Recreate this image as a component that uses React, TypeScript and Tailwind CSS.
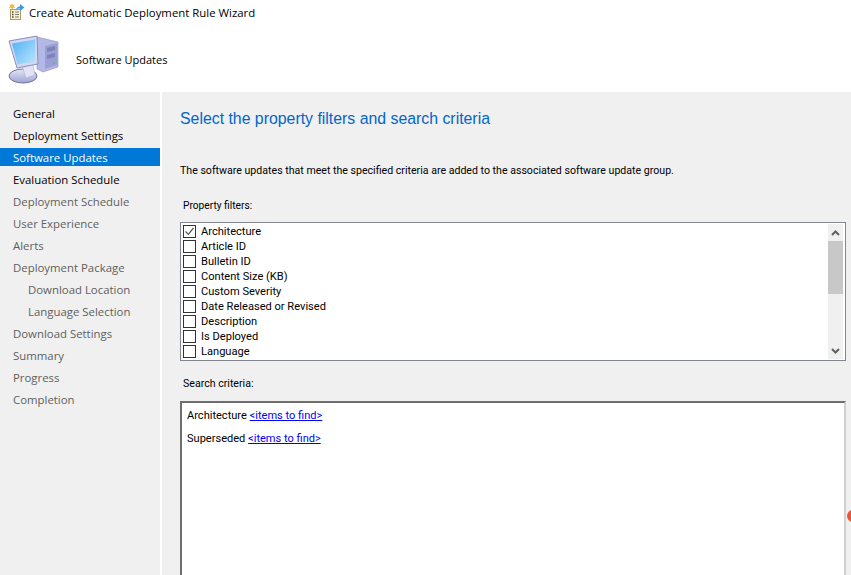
import React from 'react';

const font = { fontFamily: '"Open Sans", "Noto Sans", sans-serif' };
const bodyFont = { fontFamily: 'Roboto, "Liberation Sans", sans-serif' };

const steps = [
  { label: 'General', tone: 'done' },
  { label: 'Deployment Settings', tone: 'done' },
  { label: 'Software Updates', tone: 'active' },
  { label: 'Evaluation Schedule', tone: 'done' },
  { label: 'Deployment Schedule', tone: 'todo' },
  { label: 'User Experience', tone: 'todo' },
  { label: 'Alerts', tone: 'todo' },
  { label: 'Deployment Package', tone: 'todo' },
  { label: 'Download Location', tone: 'todo', sub: true },
  { label: 'Language Selection', tone: 'todo', sub: true },
  { label: 'Download Settings', tone: 'todo' },
  { label: 'Summary', tone: 'todo' },
  { label: 'Progress', tone: 'todo' },
  { label: 'Completion', tone: 'todo' },
];

const filters = [
  'Architecture',
  'Article ID',
  'Bulletin ID',
  'Content Size (KB)',
  'Custom Severity',
  'Date Released or Revised',
  'Description',
  'Is Deployed',
  'Language',
];

const WizardIcon = () => (
  <svg width="20" height="20" viewBox="0 0 20 20" className="shrink-0">
    <rect x="2.5" y="6.5" width="10" height="10" fill="#fbf3d2" stroke="#b09a60" />
    <path d="M4 9h1.5M4 11.5h1.5M4 14h1.5" stroke="#444" strokeWidth="1.3" />
    <path d="M7 9h4M7 11.5h4M7 14h4" stroke="#777" />
    <path d="M4 0l.9 2 2.1-.6L5.8 3.3 7.4 5 5 4.8 4 7 3 4.8.6 5l1.6-1.7L1 1.4l2.1.6z" fill="#f5b93a" />
    <path d="M8 7c.3-2.4 2-3.6 4-3.6V1l4.5 3.5L12 8V5.6c-1.7 0-3 .4-4 1.4z" fill="#3d9be0" />
  </svg>
);

const ComputerIcon = () => (
  <svg width="52" height="52" viewBox="0 0 52 52" className="shrink-0">
    <defs>
      <linearGradient id="scr" x1="0" y1="0" x2="1" y2="1">
        <stop offset="0" stopColor="#4fb0f2" />
        <stop offset="1" stopColor="#bde6fc" />
      </linearGradient>
      <linearGradient id="stand" x1="0" y1="0" x2="0" y2="1">
        <stop offset="0" stopColor="#e4e6f7" />
        <stop offset="1" stopColor="#9ea3d0" />
      </linearGradient>
    </defs>
    {/* tower */}
    <path d="M29 4l21 5v25l-15 5-6-3z" fill="#b3b8e4" stroke="#8a8fc0" strokeWidth="0.6" />
    <path d="M37 13l12-3v22l-12 4z" fill="#9aa0d6" />
    <path d="M39 15l8-2v4l-8 2zM39 22l8-2v4l-8 2z" fill="#7d83b8" />
    <circle cx="46" cy="30" r="1" fill="#5ac75a" />
    {/* stand */}
    <ellipse cx="15" cy="43" rx="14" ry="7" fill="url(#stand)" stroke="#6d7299" />
    <path d="M14 33l11-2 2 11-9 3z" fill="#e2e4f6" stroke="#a0a5cf" strokeWidth="0.5" />
    {/* monitor */}
    <path d="M1 8L29 3l1 28-21 4z" fill="#d4d7f2" stroke="#8a8fbc" />
    <path d="M4 10.500L27 6.500l.5 22L9.500 31.500z" fill="url(#scr)" />
  </svg>
);

const Chevron = ({ up }: { up?: boolean }) => (
  <svg width="9" height="6" viewBox="0 0 9 6">
    <path d={up ? 'M1 5l3.5-3.5L8 5' : 'M1 1l3.5 3.5L8 1'} fill="none" stroke="#606060" strokeWidth="2" />
  </svg>
);

export default function App() {
  return (
    <div className="w-[851px] h-[575px] overflow-hidden bg-white text-[11.4px] text-black flex flex-col relative" style={font}>
      <div className="h-[25px] shrink-0 flex items-center gap-[1px] pl-[8px]">
        <WizardIcon />
        <span>Create Automatic Deployment Rule Wizard</span>
      </div>

      <div className="h-[67px] shrink-0 flex items-center pl-[8px]">
        <ComputerIcon />
        <span className="ml-[16px] mt-[4px] text-[11px]">Software Updates</span>
      </div>

      <div className="flex-1 flex min-h-0">
        <nav className="w-[160px] shrink-0 bg-[#f0f0f0] pt-[11px] mr-[2px]">
          {steps.map((s) => (
            <div key={s.label} className="h-[22px] flex items-center">
              <div
                className={
                  'h-[18px] mb-[2px] pt-[2px] w-full flex items-center ' +
                  (s.sub ? 'pl-[28px] ' : 'pl-[13px] ') +
                  (s.tone === 'active'
                    ? 'bg-[#0078d7] text-white'
                    : s.tone === 'done'
                      ? 'text-black'
                      : 'text-[#5f5f5f]')
                }
              >
                {s.label}
              </div>
            </div>
          ))}
        </nav>

        <main className="flex-1 bg-[#f0f0f0] pl-[18px] pr-[5px] pt-[16px] min-w-0" style={bodyFont}>
          <h1 className="text-[15.85px] leading-[22px] text-[#0066cc]" style={{ fontFamily: '"Liberation Sans", sans-serif' }}>
            Select the property filters and search criteria
          </h1>

          <p className="mt-[32px] leading-[18px] text-[10.6px]">
            The software updates that meet the specified criteria are added to the associated software update group.
          </p>

          <p className="mt-[17px] pl-[3px] leading-[18px] text-[10.2px]">Property filters:</p>

          <div className="mt-[7px] h-[139px] bg-white border border-[#82878f] flex text-[11.1px]">
            <div className="flex-1 pt-[1px] pl-[2px]">
              {filters.map((f, i) => (
                <label key={f} className="h-[15px] flex items-center gap-[5px] leading-none">
                  <span className="w-[13px] h-[13px] border border-[#333] flex items-center justify-center">
                    {i === 0 && (
                      <svg width="11" height="11" viewBox="0 0 11 11">
                        <path d="M1.5 5.5l2.8 2.8L9.500 2" fill="none" stroke="#555" strokeWidth="1.2" />
                      </svg>
                    )}
                  </span>
                  <span>{f}</span>
                </label>
              ))}
            </div>
            <div className="w-[15px] my-[1px] mr-[2px] bg-[#f0f0f0] flex flex-col items-center">
              <div className="h-[17px] flex items-center justify-center"><Chevron up /></div>
              <div className="w-full h-[53px] bg-[#c8c8c8]" />
              <div className="flex-1" />
              <div className="h-[16px] flex items-center justify-center"><Chevron /></div>
            </div>
          </div>

          <p className="mt-[14px] pl-[3px] leading-[18px] text-[10.6px]">Search criteria:</p>

          <div className="mt-[8px] h-[300px] bg-white border-2 border-[#6e6e6e] border-r-[#d0d0d0] pl-[5px] pt-[4px] text-[11.05px]">
            <p className="leading-[18px]">
              Architecture <a href="#" className="text-[#0000ff] underline">&lt;items to find&gt;</a>
            </p>
            <p className="mt-[5px] leading-[18px]">
              Superseded <a href="#" className="text-[#0000ff] underline">&lt;items to find&gt;</a>
            </p>
          </div>
        </main>
      </div>

      {/* red marker poking in from the right edge */}
      <div className="absolute left-[847px] top-[510px] w-[12px] h-[12px] rounded-full bg-[#e8553a]" />
    </div>
  );
}
